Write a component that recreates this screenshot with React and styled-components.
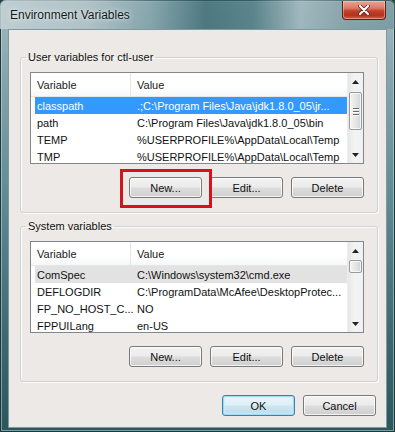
import React from 'react';
import styled, { createGlobalStyle, css } from 'styled-components';

const Global = createGlobalStyle`
  html, body { margin: 0; padding: 0; width: 395px; height: 432px; overflow: hidden; background: #24444a; }
  * { box-sizing: border-box; }
`;

const Window = styled.div`
  width: 395px;
  height: 432px;
  display: flex;
  flex-direction: column;
  background: linear-gradient(180deg, #a3bac0 0%, #86a4ab 18%, #5a878f 50%, #3a676e 80%, #2b565c 100%);
  box-shadow: inset 0 0 0 1px #1d373c, inset 0 0 0 2px rgba(210, 228, 232, 0.5);
  border-radius: 6px 6px 0 0;
  font-family: "Liberation Sans", Arial, sans-serif;
  overflow: hidden;
`;

const TitleBar = styled.div`
  height: 29px;
  flex: none;
  display: flex;
  align-items: flex-start;
  padding-left: 10px;
  background: linear-gradient(90deg,
    rgba(196, 210, 213, 0.85) 0%,
    rgba(180, 198, 202, 0.8) 22%,
    rgba(120, 155, 162, 0.6) 38%,
    rgba(52, 100, 109, 0.75) 52%,
    rgba(62, 110, 118, 0.7) 64%,
    rgba(160, 184, 189, 0.75) 76%,
    rgba(120, 152, 158, 0.6) 88%,
    rgba(96, 134, 141, 0.5) 100%);
`;

const Title = styled.div`
  align-self: center;
  margin-top: 1px;
  font-size: 12px;
  color: #101a1c;
  text-shadow: 0 0 6px rgba(255, 255, 255, 0.8), 0 0 2px rgba(255, 255, 255, 0.6);
`;

const CloseButton = styled.div`
  margin-left: auto;
  margin-right: 9px;
  margin-top: 1px;
  width: 44px;
  height: 19px;
  display: flex;
  align-items: center;
  justify-content: center;
  border: 1px solid #5e2219;
  border-top: none;
  border-radius: 0 0 4px 4px;
  background: linear-gradient(180deg, #e9a596 0%, #d87a66 40%, #c2412a 55%, #b2321c 80%, #d0684e 100%);
  box-shadow: inset 0 0 0 1px rgba(255, 210, 200, 0.45);
`;

const Client = styled.div`
  flex: 1;
  margin: 0 8px 4px 8px;
  border: 1px solid #7d9aa0;
  background: #ece9e6;
  padding: 20px 8px 11px 11px;
  display: flex;
  flex-direction: column;
`;

const Group = styled.fieldset`
  margin: ${p => (p.$second ? '6px 0 0 0' : '0')};
  padding: 8px 13px 14px 9px;
  border: 1px solid #cdd2d4;
  border-radius: 3px;
  box-shadow: 1px 1px 0 #fbfbfa, inset 1px 1px 0 #fbfbfa;
  min-width: 0;
`;

const Legend = styled.legend`
  margin-left: -4px;
  padding: 0 2px;
  font-size: 11px;
  line-height: 14px;
  color: #111;
`;

const ListView = styled.div`
  height: 92px;
  border: 1px solid #82878f;
  background: #fff;
  display: flex;
  overflow: hidden;
`;

const Table = styled.div`
  flex: 1;
  min-width: 0;
  overflow: hidden;
  font-size: 11px;
  color: #111;
`;

const Header = styled.div`
  height: 24px;
  display: flex;
  align-items: center;
  background: linear-gradient(180deg, #ffffff 0%, #ffffff 60%, #f6f7f8 100%);
  border-bottom: 1px solid #e4e6e8;
  color: #1b1b1b;
`;

const HeadCell = styled.div`
  height: 100%;
  display: flex;
  align-items: center;
  padding-left: 6px;
  width: ${p => (p.$first ? '100px' : 'auto')};
  flex: ${p => (p.$first ? 'none' : '1')};
  border-right: ${p => (p.$first ? '1px solid #e3e5e7' : 'none')};
`;

const Row = styled.div`
  height: 17px;
  margin-left: 4px;
  display: flex;
  align-items: center;
  white-space: nowrap;
  ${p => p.$state === 'active' && css`
    background: #3399ff;
    color: #fff;
  `}
  ${p => p.$state === 'inactive' && css`
    background: #e2e2e2;
  `}
`;

const Cell = styled.div`
  padding-left: 2px;
  width: ${p => (p.$first ? '100px' : 'auto')};
  flex: ${p => (p.$first ? 'none' : '1')};
  overflow: hidden;
  white-space: nowrap;
`;

const Scrollbar = styled.div`
  width: 16px;
  flex: none;
  display: flex;
  flex-direction: column;
  background: linear-gradient(90deg, #e6e6e6 0%, #f3f3f3 40%, #f1f1f1 100%);
  border-left: 1px solid #eeeeee;
`;

const ArrowBtn = styled.div`
  height: 17px;
  flex: none;
  display: flex;
  align-items: center;
  justify-content: center;
`;

const Track = styled.div`
  flex: 1;
  display: flex;
  flex-direction: column;
  padding: 0 1px;
`;

const Thumb = styled.div`
  height: ${p => p.$h}px;
  border: 1px solid #999b9e;
  border-radius: 2px;
  background: linear-gradient(90deg, #f4f4f4 0%, #e6e6e6 50%, #d4d4d4 100%);
  box-shadow: inset 0 0 0 1px rgba(255, 255, 255, 0.7);
  display: flex;
  flex-direction: column;
  align-items: center;
  justify-content: center;
  gap: 2px;
`;

const Grip = styled.div`
  width: 6px;
  height: 1px;
  background: #6a6a6a;
  box-shadow: 0 1px 0 #fff;
`;

const ButtonRow = styled.div`
  display: flex;
  justify-content: flex-end;
  gap: 8px;
  margin-top: 13px;
  padding-right: ${p => (p.$dialog ? '2px' : '0')};
`;

const Button = styled.button`
  width: 73px;
  height: 21px;
  padding: 0;
  font: 11px "Liberation Sans", Arial, sans-serif;
  color: #111;
  border: 1px solid #7a7a7a;
  border-radius: 3px;
  background: linear-gradient(180deg, #f3f3f3 0%, #ebebeb 48%, #dddddd 52%, #cfcfcf 100%);
  box-shadow: inset 0 0 0 1px rgba(255, 255, 255, 0.75);
  ${p => p.$default && css`
    border-color: #3c7fb1;
    box-shadow: inset 0 0 0 1px #9fdcf3, inset 0 0 0 2px rgba(200, 238, 250, 0.6);
    background: linear-gradient(180deg, #eaf6fb 0%, #dfeff6 48%, #cde6f1 52%, #bfdcea 100%);
  `}
`;

const Marked = styled.div`
  position: relative;
  &::after {
    content: '';
    position: absolute;
    left: -9px;
    top: -8px;
    right: -10px;
    bottom: -10px;
    border: 3px solid #d3141c;
    pointer-events: none;
  }
`;

const Up = () => (
  <svg width="7" height="4" viewBox="0 0 7 4"><path d="M3.5 0 L7 4 L0 4 Z" fill="#222" /></svg>
);
const Down = () => (
  <svg width="7" height="4" viewBox="0 0 7 4"><path d="M0 0 L7 0 L3.5 4 Z" fill="#222" /></svg>
);

function List({ rows, thumbTop, thumbH, grip }) {
  return (
    <ListView>
      <Table>
        <Header>
          <HeadCell $first>Variable</HeadCell>
          <HeadCell>Value</HeadCell>
        </Header>
        {rows.map(r => (
          <Row key={r[0]} $state={r[2]}>
            <Cell $first>{r[0]}</Cell>
            <Cell>{r[1]}</Cell>
          </Row>
        ))}
      </Table>
      <Scrollbar>
        <ArrowBtn><Up /></ArrowBtn>
        <Track>
          <div style={{ height: thumbTop }} />
          <Thumb $h={thumbH}>
            {grip && (<><Grip /><Grip /><Grip /></>)}
          </Thumb>
        </Track>
        <ArrowBtn><Down /></ArrowBtn>
      </Scrollbar>
    </ListView>
  );
}

const userRows = [
  ['classpath', '.;C:\\Program Files\\Java\\jdk1.8.0_05\\jr...', 'active'],
  ['path', 'C:\\Program Files\\Java\\jdk1.8.0_05\\bin'],
  ['TEMP', '%USERPROFILE%\\AppData\\Local\\Temp'],
  ['TMP', '%USERPROFILE%\\AppData\\Local\\Temp'],
];

const sysRows = [
  ['ComSpec', 'C:\\Windows\\system32\\cmd.exe', 'inactive'],
  ['DEFLOGDIR', 'C:\\ProgramData\\McAfee\\DesktopProtec...'],
  ['FP_NO_HOST_C...', 'NO'],
  ['FPPUILang', 'en-US'],
];

export default function App() {
  return (
    <>
      <Global />
      <Window>
        <TitleBar>
          <Title>Environment Variables</Title>
          <CloseButton>
            <svg width="12" height="10" viewBox="0 0 12 10">
              <path d="M2 1 L10 9 M10 1 L2 9" stroke="#5a1a10" strokeWidth="3.6" strokeLinecap="round" />
              <path d="M2 1 L10 9 M10 1 L2 9" stroke="#ffffff" strokeWidth="2.2" strokeLinecap="round" />
            </svg>
          </CloseButton>
        </TitleBar>
        <Client>
          <Group>
            <Legend>User variables for ctl-user</Legend>
            <List rows={userRows} thumbTop={2} thumbH={38} grip />
            <ButtonRow>
              <Marked><Button>New...</Button></Marked>
              <Button>Edit...</Button>
              <Button>Delete</Button>
            </ButtonRow>
          </Group>
          <Group $second>
            <Legend>System variables</Legend>
            <List rows={sysRows} thumbTop={1} thumbH={13} />
            <ButtonRow>
              <Button>New...</Button>
              <Button>Edit...</Button>
              <Button>Delete</Button>
            </ButtonRow>
          </Group>
          <ButtonRow $dialog>
            <Button $default>OK</Button>
            <Button>Cancel</Button>
          </ButtonRow>
        </Client>
      </Window>
    </>
  );
}
